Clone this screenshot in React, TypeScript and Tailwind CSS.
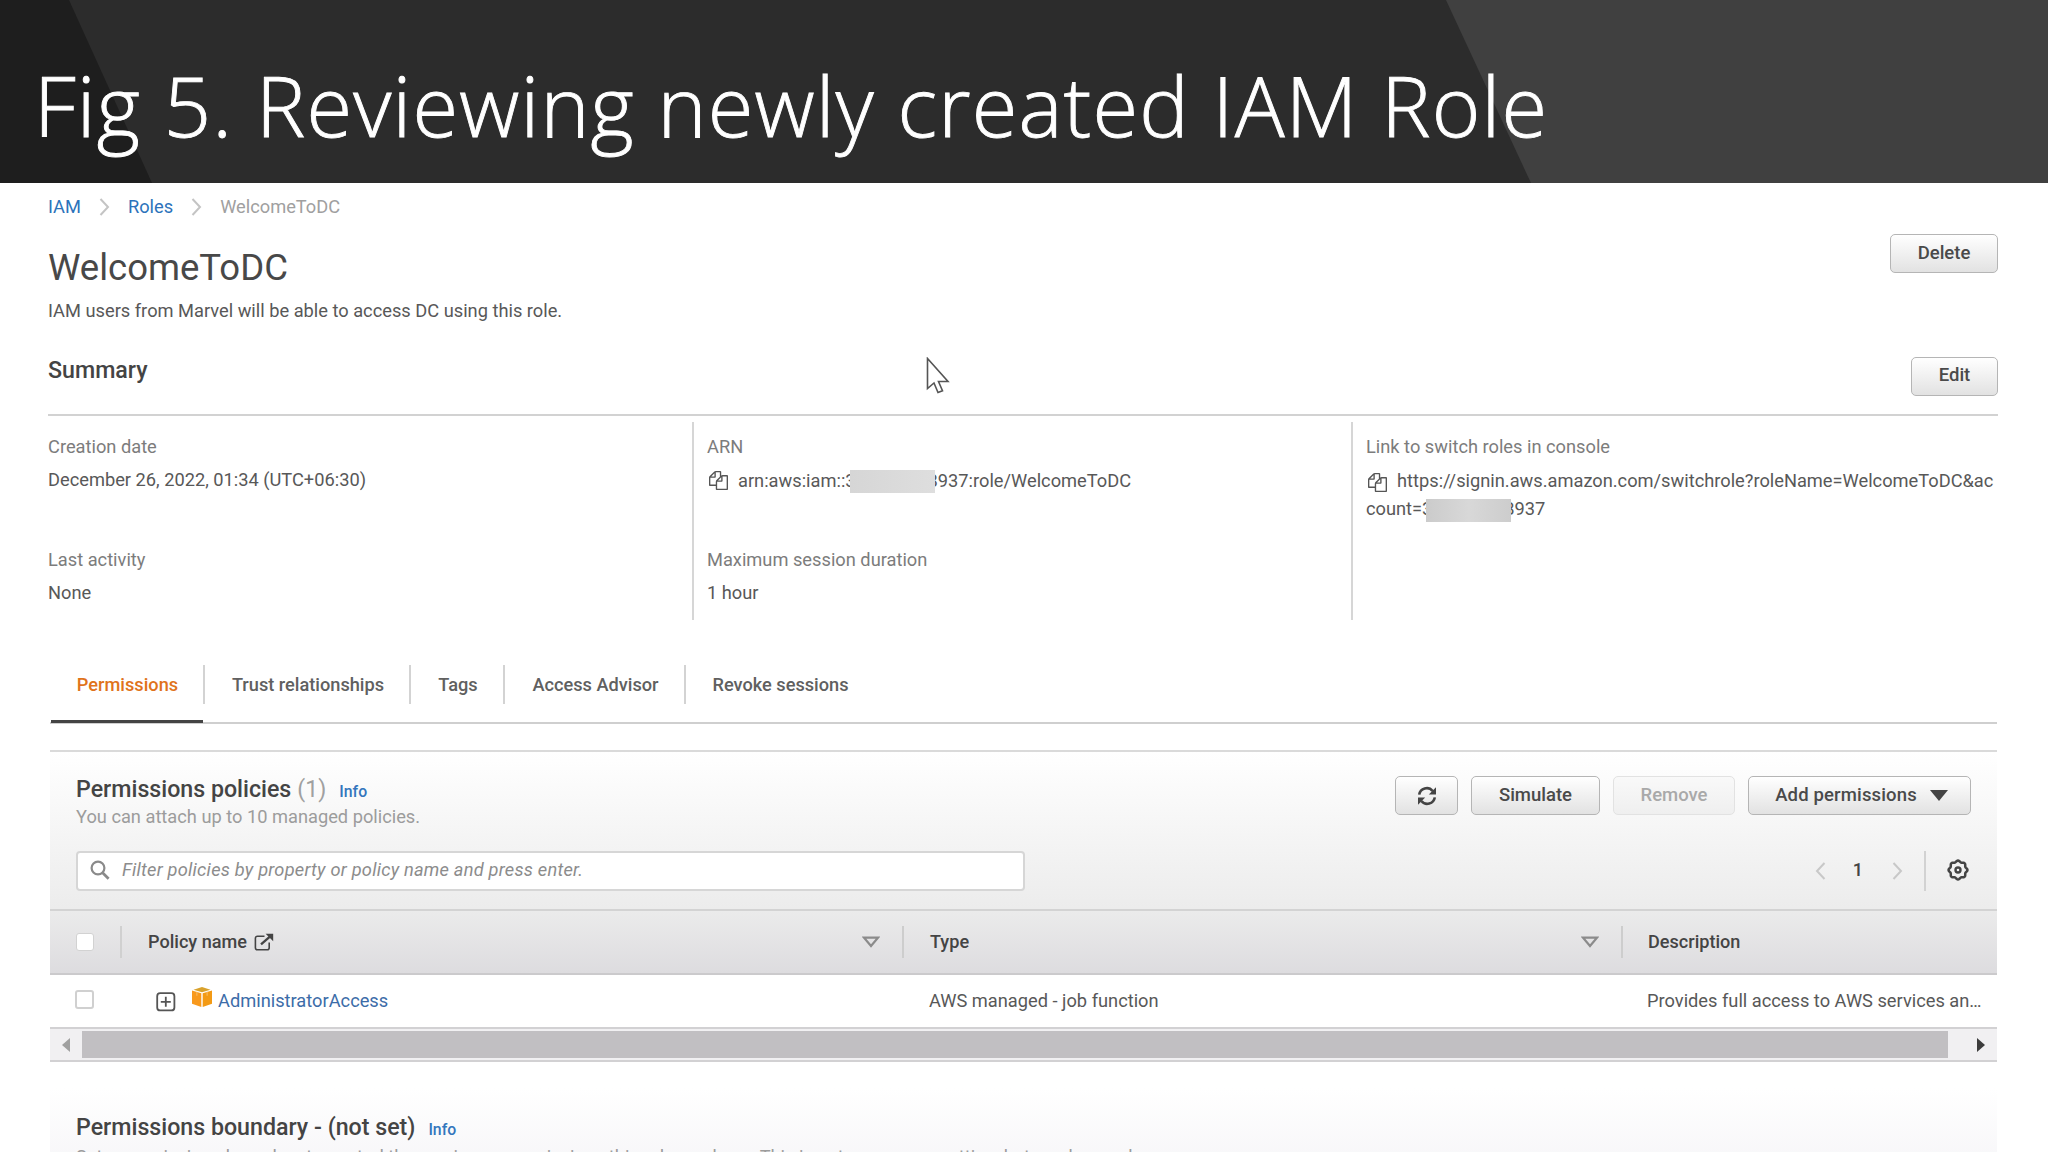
import type { ReactNode } from "react"
import clsx from "clsx"

function ChevronRight({ className }: { className?: string }) {
  return (
    <svg viewBox="0 0 11 18" className={clsx("h-[18px] w-[11px] fill-none stroke-[2]", className)}>
      <path d="M1.5 1L9 9l-7.5 8" stroke="currentColor" />
    </svg>
  )
}

function CopyIcon({ className }: { className?: string }) {
  return (
    <svg viewBox="0 0 1792 1792" className={clsx("inline-block size-[19px]", className)} fill="#555">
      <path d="M1696 384q40 0 68 28t28 68v1216q0 40-28 68t-68 28h-960q-40 0-68-28t-28-68v-288h-544q-40 0-68-28t-28-68v-672q0-40 20-88t48-76l408-408q28-28 76-48t88-20h416q40 0 68 28t28 68v328q68-40 128-40h416zm-544 213l-299 299h299v-299zm-640-384l-299 299h299v-299zm196 647l316-316v-416h-384v416q0 40-28 68t-68 28h-416v640h512v-256q0-40 20-88t48-76zm956 804v-1152h-384v416q0 40-28 68t-68 28h-416v640h896z" />
    </svg>
  )
}

function RefreshIcon() {
  return (
    <svg viewBox="0 0 20 20" className="size-5" fill="none" stroke="#444" strokeWidth="2.6">
      <path d="M2.2 8.6A7.6 7.6 0 0 1 15.6 5" />
      <path d="M17.8 11.4A7.6 7.6 0 0 1 4.4 15" />
      <path d="M19 1.2v7.2h-7.2z" fill="#444" stroke="none" />
      <path d="M1 18.8v-7.2h7.2z" fill="#444" stroke="none" />
    </svg>
  )
}

// outline with eight rounded teeth
const gearPath =
  Array.from({ length: 96 }, (_, i) => {
    const a = (i / 96) * Math.PI * 2
    const r = 8.7 + 0.75 * Math.cos(8 * a)
    return `${i ? "L" : "M"}${(11 + r * Math.cos(a)).toFixed(2)} ${(11 + r * Math.sin(a)).toFixed(2)}`
  }).join("") + "Z"

function GearIcon() {
  return (
    <svg viewBox="0 0 22 22" className="size-[22px]" fill="none" stroke="#444">
      <path d={gearPath} strokeWidth="2.5" />
      <circle cx="11" cy="11" r="2.5" strokeWidth="2.4" />
    </svg>
  )
}

function SearchIcon() {
  return (
    <svg viewBox="0 0 20 20" className="size-[20px]" fill="none" stroke="#8a8a8a" strokeWidth="2.2">
      <circle cx="8" cy="8" r="6.4" />
      <path d="M12.6 12.8l6 6" strokeWidth="2.8" />
    </svg>
  )
}

function ExternalIcon() {
  return (
    <svg viewBox="0 0 20 18" className="h-[18px] w-5" fill="none" stroke="#444" strokeWidth="1.6">
      <path d="M10.5 3.2H3.4a2 2 0 0 0-2 2v9.6a2 2 0 0 0 2 2h9.8a2 2 0 0 0 2-2V9.6" />
      <path d="M7 11.4l8.6-7.6" strokeWidth="2.3" />
      <path d="M11.6.8h7.6v7.4z" fill="#444" stroke="none" />
    </svg>
  )
}

function SortIcon() {
  return (
    <svg viewBox="0 0 18 12" className="h-3 w-[18px]" fill="none" stroke="#8b8b8b" strokeWidth="2.2">
      <path d="M2 1.6h14L9 10z" />
    </svg>
  )
}

function ExpandIcon() {
  return (
    <svg viewBox="0 0 20 20" className="size-5" fill="none" stroke="#555" strokeWidth="1.8">
      <rect x="1.2" y="1.2" width="17.2" height="17.2" rx="3" />
      <path d="M4.8 9.8h10M9.8 4.8v10" />
    </svg>
  )
}

function PolicyIcon() {
  return (
    <svg viewBox="0 0 20 20" className="size-5">
      <path d="M10 0l8.5 2.7L10 5.2 1.5 2.7z" fill="#d9a22c" />
      <path d="M0 3.5l9.3 2.7v13.8L0 16.8z" fill="#f8991d" />
      <path d="M20 3.5l-9.3 2.7v13.8l9.3-3.2z" fill="#f39a14" />
      <path d="M4.9 4.6v4.2M15.1 4.6v4.2" stroke="#fbc87c" strokeWidth=".8" />
    </svg>
  )
}

function Button({ children, disabled, className }: { children: ReactNode; disabled?: boolean; className?: string }) {
  return (
    <button
      className={clsx(
        "flex h-[39px] items-center justify-center rounded-[5px] border bg-linear-to-b text-[18.5px] font-medium",
        disabled
          ? "border-[#e2e2e2] from-[#f9f9f9] to-[#efefef] text-[#a9a9a9]"
          : "border-[#b5b5b5] from-white to-[#e2e2e2] text-[#4a4a4a]",
        className,
      )}
    >
      {children}
    </button>
  )
}

function Field({ label, children }: { label: string; children: ReactNode }) {
  return (
    <div className="h-[113px] leading-6">
      <div className="text-[#7c7c7c]">{label}</div>
      <div className="mt-[9px] text-[#585858]">{children}</div>
    </div>
  )
}

const tabs = [
  { label: "Permissions", width: "w-[155px]" },
  { label: "Trust relationships", width: "w-[206px]" },
  { label: "Tags", width: "w-[94px]" },
  { label: "Access Advisor", width: "w-[181px]" },
  { label: "Revoke sessions", width: "w-[189px]" },
]

function SlideHeader() {
  return (
    <header className="relative h-[183px] bg-[#2c2c2c]">
      <svg viewBox="0 0 2048 183" className="absolute inset-0 h-[183px] w-full">
        <path d="M0 0h69l83 183H0z" fill="#1e1e1e" />
        <path d="M1446 0h602v183h-517z" fill="#404040" />
      </svg>
      <h1 className="relative pt-[48px] pl-[34px] font-['Open_Sans',sans-serif] text-[83px] leading-[113px] font-light tracking-[1.17px] whitespace-nowrap text-white [-webkit-text-stroke:0.9px_white]">
        Fig 5. Reviewing newly created IAM Role
      </h1>
    </header>
  )
}

function Summary() {
  return (
    <section>
      <div className="flex h-[61px] items-start justify-between border-b-2 border-[#d2d2d2]">
        <h3 className="pt-[1px] text-[23.2px] leading-7 font-medium text-[#444]">Summary</h3>
        <Button className="mt-[2px] w-[87px] pb-[1px]">Edit</Button>
      </div>
      <div className="mt-[6px] flex h-[198px]">
        <div className="w-[644px] pt-[13px]">
          <Field label="Creation date">December 26, 2022, 01:34 (UTC+06:30)</Field>
          <Field label="Last activity">None</Field>
        </div>
        <div className="w-[659px] border-l-2 border-[#d6d6d6] pt-[13px] pl-[13px]">
          <Field label="ARN">
            <div className="flex h-6 items-center pt-[1px] whitespace-nowrap">
              <CopyIcon className="mr-[10px] ml-[2px]" />
              arn:aws:iam::3
              <span className="relative mt-[1px] -mr-[7px] -ml-[6px] h-[23px] w-[85px] bg-linear-to-r from-[#d6d6d6] to-[#dedede]" />
              8937:role/WelcomeToDC
            </div>
          </Field>
          <Field label="Maximum session duration">1 hour</Field>
        </div>
        <div className="w-[646px] border-l-2 border-[#d6d6d6] pt-[13px] pl-[13px]">
          <Field label="Link to switch roles in console">
            <div className="-mt-[1px] leading-[27px] whitespace-nowrap">
              <CopyIcon className="mr-[10px] ml-[2px]" />
              https://signin.aws.amazon.com/switchrole?roleName=WelcomeToDC&amp;ac
              <div className="flex items-center">
                count=3
                <span className="relative -mr-[7px] -ml-[6px] mt-[5px] h-[23px] w-[85px] bg-linear-to-r from-[#cbcbcb] via-[#d8d8d8] to-[#cdcdcd]" />
                8937
              </div>
            </div>
          </Field>
        </div>
      </div>
    </section>
  )
}

function Tabs() {
  return (
    <nav className="mt-[45px] ml-[2px] flex h-[59px] w-[1947px] border-b-2 border-[#cfcfcf] text-[18.2px] font-medium text-[#606060]">
      {tabs.map((tab, i) => (
        <div key={tab.label} className={clsx("relative h-full", tab.width)}>
          <div
            className={clsx(
              "flex h-[39px] items-center justify-center",
              i < tabs.length - 1 && "border-r-2 border-[#d3d3d3] pl-[2px]",
              i === 0 && "text-[#e0731b]",
            )}
          >
            {tab.label}
          </div>
          {i === 0 && <div className="absolute right-[2px] -bottom-[1px] left-[1px] h-[3px] bg-[#444]" />}
        </div>
      ))}
    </nav>
  )
}

function PermissionsPolicies() {
  return (
    <section className="mt-[26px] ml-[2px] w-[1947px] border-t-2 border-[#dadada]">
      <div className="h-[157px] bg-linear-to-b from-white to-[#ececec] px-[26px] pt-6">
        <div className="flex h-[75px] justify-between">
          <div>
            <div className="-mt-[1px] flex h-[29px] items-baseline leading-7">
              <h3 className="text-[23.2px] font-medium text-[#444]">Permissions policies</h3>
              <span className="ml-[6px] text-[23.2px] text-[#a0a0a0]">(1)</span>
              <a className="ml-[13px] text-[15.8px] font-medium text-[#3376bd]">Info</a>
            </div>
            <p className="leading-[26px] text-[#9c9c9c]">You can attach up to 10 managed policies.</p>
          </div>
          <div className="flex gap-[13px]">
            <Button className="w-[63px]">
              <RefreshIcon />
            </Button>
            <Button className="w-[129px]">Simulate</Button>
            <Button disabled className="w-[122px]">
              Remove
            </Button>
            <Button className="w-[223px] pl-[4px]">
              <span className="tracking-[0.15px]">Add permissions</span>
              <svg viewBox="0 0 18 11" className="ml-[13px] h-[11px] w-[18px]">
                <path d="M0 0h18L9 11z" fill="#444" />
              </svg>
            </Button>
          </div>
        </div>
        <div className="flex h-10 items-center justify-between">
          <div className="flex h-10 w-[949px] items-center rounded-[4px] border-2 border-[#d6d6d6] bg-white pb-[2px] pl-[12px] tracking-[0.22px] text-[#8c8c8c] italic">
            <SearchIcon />
            <span className="ml-[12px]">Filter policies by property or policy name and press enter.</span>
          </div>
          <div className="flex items-center text-[#c8c8c8]">
            <ChevronRight className="rotate-180" />
            <span className="mr-[29px] ml-[27px] pb-[4px] text-[18px] font-medium text-[#444]">1</span>
            <ChevronRight />
            <div className="ml-[21px] h-10 w-[2px] bg-[#d2d2d2]" />
            <div className="mr-[2px] mb-[2px] ml-[21px]">
              <GearIcon />
            </div>
          </div>
        </div>
      </div>

      <div className="flex h-[66px] items-center border-y-2 border-t-[#d3d3d3] border-b-[#cbcacc] bg-linear-to-b from-[#ebebeb] to-[#dddcdf] pb-[1px] text-[18.1px] font-medium text-[#444]">
        <div className="flex h-8 w-[72px] items-center border-r-2 border-[#d0d0d0] pl-[26px]">
          <div className="size-[18px] rounded-[3px] border border-[#d2d2d2] bg-white" />
        </div>
        <div className="flex h-8 w-[782px] items-center border-r-2 border-[#cdcdcd] pr-[22px] pl-[26px]">
          Policy name
          <div className="ml-[7px]">
            <ExternalIcon />
          </div>
          <div className="ml-auto">
            <SortIcon />
          </div>
        </div>
        <div className="flex h-8 w-[719px] items-center justify-between border-r-2 border-[#cdcdcd] pr-[22px] pl-[26px]">
          Type
          <SortIcon />
        </div>
        <div className="pl-[25px]">Description</div>
      </div>

      <div className="flex h-[52px] items-center bg-white text-[#585858]">
        <div className="w-[72px] pb-[4px] pl-[25px]">
          <div className="size-[19px] rounded-[3px] border-2 border-[#d0d0d0] bg-white" />
        </div>
        <div className="flex w-[782px] items-center pl-[34px]">
          <div className="mt-[2px]">
            <ExpandIcon />
          </div>
          <div className="mr-[6px] mb-[8px] ml-[16px]">
            <PolicyIcon />
          </div>
          <a className="text-[#3c6ca8]">AdministratorAccess</a>
        </div>
        <div className="w-[719px] pl-[25px]">AWS managed - job function</div>
        <div className="pl-[24px] whitespace-nowrap">Provides full access to AWS services an…</div>
      </div>

      <div className="flex h-[35px] items-center border-y-2 border-[#d2d1d3] bg-[#f1f0f2]">
        <svg viewBox="0 0 8 14" className="mr-[12px] ml-[12px] h-[14px] w-[8px]">
          <path d="M8 0v14L0 7z" fill="#a0a0a0" />
        </svg>
        <div className="h-[27px] flex-1 bg-[#c1bfc2]" />
        <svg viewBox="0 0 8 14" className="mr-[12px] ml-[29px] h-[14px] w-[8px]">
          <path d="M0 0v14l8-7z" fill="#3c3c3c" />
        </svg>
      </div>
    </section>
  )
}

function PermissionsBoundary() {
  return (
    <section className="mt-[26px] ml-[2px] w-[1947px] bg-linear-to-b from-white to-[#f4f3f6] pt-[25px] pb-6 pl-[26px]">
      <div className="flex h-7 items-baseline leading-7">
        <h3 className="text-[23.2px] font-medium text-[#444]">Permissions boundary - (not set)</h3>
        <a className="ml-[13px] text-[15.8px] font-medium text-[#3376bd]">Info</a>
      </div>
      <p className="mt-[4px] leading-6 whitespace-nowrap text-[#9c9c9c]">
        Set a permissions boundary to control the maximum permissions this role can have. This is not a common setting, but can be used
      </p>
    </section>
  )
}

function Cursor() {
  return (
    <svg viewBox="0 0 24 37" className="absolute top-[357px] left-[926px] h-[37px] w-6">
      <path d="M1.5 1.5v30l6.5-5.5 4 9.5 4.5-1.8-4-9.2h9.5z" fill="white" stroke="#555" strokeWidth="1.6" />
    </svg>
  )
}

export default function App() {
  return (
    <div className="relative h-[1152px] w-[2048px] overflow-hidden bg-white font-[Roboto,sans-serif] text-[18.25px]">
      <SlideHeader />
      <main className="w-[1998px] pt-3 pl-[48px]">
        <div className="flex h-6 items-center text-[#2c73bb]">
          <a>IAM</a>
          <ChevronRight className="mr-[18px] ml-[18px] text-[#c4c4c4]" />
          <a>Roles</a>
          <ChevronRight className="mr-[18px] ml-[18px] text-[#c4c4c4]" />
          <span className="text-[#a0a0a0]">WelcomeToDC</span>
        </div>
        <div className="flex h-[136px] items-start justify-between">
          <div className="pt-[27px]">
            <h2 className="text-[36.5px] leading-[44px] text-[#484848]">WelcomeToDC</h2>
            <p className="mt-[9px] leading-6 text-[#585858]">IAM users from Marvel will be able to access DC using this role.</p>
          </div>
          <Button className="mt-[15px] w-[108px]">Delete</Button>
        </div>
        <Summary />
        <Tabs />
        <PermissionsPolicies />
        <PermissionsBoundary />
      </main>
      <Cursor />
    </div>
  )
}
